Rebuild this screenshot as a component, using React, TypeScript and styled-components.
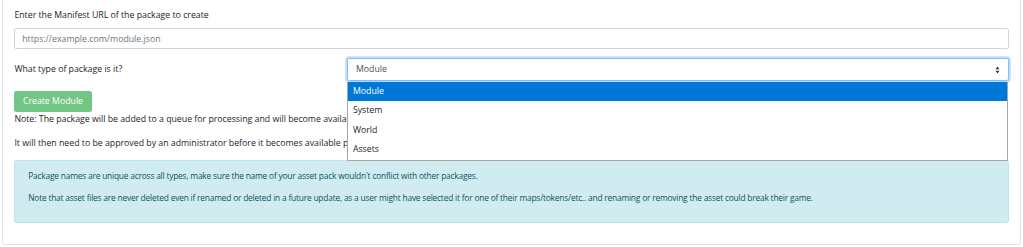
import React from "react";
import styled, { createGlobalStyle } from "styled-components";

const GlobalStyle = createGlobalStyle`
  html, body {
    margin: 0;
    padding: 0;
    background: #ffffff;
  }
  body {
    font-family: "Open Sans", "Noto Sans", sans-serif;
    font-size: 8.75px;
    line-height: 13.7px;
    color: #212529;
  }
  * {
    box-sizing: border-box;
  }
`;

const Page = styled.div`
  padding: 0 2px 0 2px;
`;

const Card = styled.div`
  margin-top: -3px;
  border: 1px solid #e2e2e2;
  border-radius: 2px;
  padding: 11.4px 11.4px 12.4px;
  background: #fff;
`;

const FormGroup = styled.div`
  margin-bottom: 9.1px;
`;

const Label = styled.label`
  display: block;
  margin-bottom: 4.6px;
`;

const Input = styled.input`
  display: block;
  width: 100%;
  height: 21.7px;
  padding: 3.4px 6.8px;
  font: inherit;
  color: #495057;
  border: 1px solid #ced4da;
  border-radius: 2.3px;
  outline: none;

  &::placeholder {
    color: #6c757d;
  }
`;

const Row = styled.div`
  display: grid;
  grid-template-columns: 333px 1fr;
  align-items: center;
  margin-bottom: 9.6px;
`;

const RowLabel = styled.label`
  display: block;
`;

const SelectWrap = styled.div`
  position: relative;
`;

const SelectBox = styled.div`
  height: 22.5px;
  display: flex;
  align-items: center;
  justify-content: space-between;
  padding: 0 8px 0 7.5px;
  color: #495057;
  border: 1px solid #80bdff;
  border-radius: 2.3px;
  box-shadow: 0 0 0 1.8px rgba(0, 123, 255, 0.25);
  background: #fff;
`;

const Dropdown = styled.ul`
  position: absolute;
  top: 23.5px;
  left: 0;
  right: 1px;
  margin: 0;
  padding: 0;
  list-style: none;
  background: #fff;
  border: 1px solid #a7a7a7;
  border-top: none;
  z-index: 5;
`;

const Option = styled.li<{ $active?: boolean }>`
  height: 19.5px;
  line-height: 19.5px;
  padding-left: 4.5px;
  background: ${({ $active }) => ($active ? "#0078d7" : "#fff")};
  color: ${({ $active }) => ($active ? "#fff" : "#212529")};
`;

const Button = styled.button`
  display: inline-block;
  height: 21.7px;
  padding: 0 7.5px;
  font: inherit;
  color: #fff;
  background: #73c586;
  border: 1px solid #73c586;
  border-radius: 2.3px;
  margin-bottom: 1px;
`;

const Text = styled.p<{ $small?: boolean }>`
  margin: 0 0 ${({ $small }) => ($small ? "8.6px" : "9.6px")};
  font-size: ${({ $small }) => ($small ? "8.4px" : "inherit")};
  letter-spacing: ${({ $small }) => ($small ? "-0.2px" : "normal")};
`;

const Alert = styled.div`
  padding: 8px 11.4px 8.4px 12.8px;
  margin-bottom: 9.1px;
  color: #0c5460;
  background: #d1ecf1;
  border: 1px solid #bee5eb;
  border-radius: 2.3px;
`;

const SortIcon = () => (
  <svg width="5" height="8" viewBox="0 0 5 8">
    <path d="M2.5 0.5 L4.5 3.2 L0.5 3.2 Z" fill="#343a40" />
    <path d="M2.5 7.5 L4.5 4.8 L0.5 4.8 Z" fill="#343a40" />
  </svg>
);

const types = ["Module", "System", "World", "Assets"];

export default function App() {
  return (
    <>
      <GlobalStyle />
      <Page>
        <Card>
          <FormGroup>
            <Label>Enter the Manifest URL of the package to create</Label>
            <Input placeholder="https://example.com/module.json" />
          </FormGroup>
          <Row>
            <RowLabel>What type of package is it?</RowLabel>
            <SelectWrap>
              <SelectBox>
                <span>Module</span>
                <SortIcon />
              </SelectBox>
              <Dropdown>
                {types.map((t, i) => (
                  <Option key={t} $active={i === 0}>
                    {t}
                  </Option>
                ))}
              </Dropdown>
            </SelectWrap>
          </Row>
          <Button disabled>Create Module</Button>
          <Text>
            Note: The package will be added to a queue for processing and will become available once processed.
          </Text>
          <Text>
            It will then need to be approved by an administrator before it becomes available publicly.
          </Text>
          <Alert>
            <Text $small>
              Package names are unique across all types, make sure the name of your asset pack wouldn't conflict with other packages.
            </Text>
            <Text $small>
              Note that asset files are never deleted even if renamed or deleted in a future update, as a user might have selected it for one of their maps/tokens/etc.. and renaming or removing the asset could break their game.
            </Text>
          </Alert>
        </Card>
      </Page>
    </>
  );
}
